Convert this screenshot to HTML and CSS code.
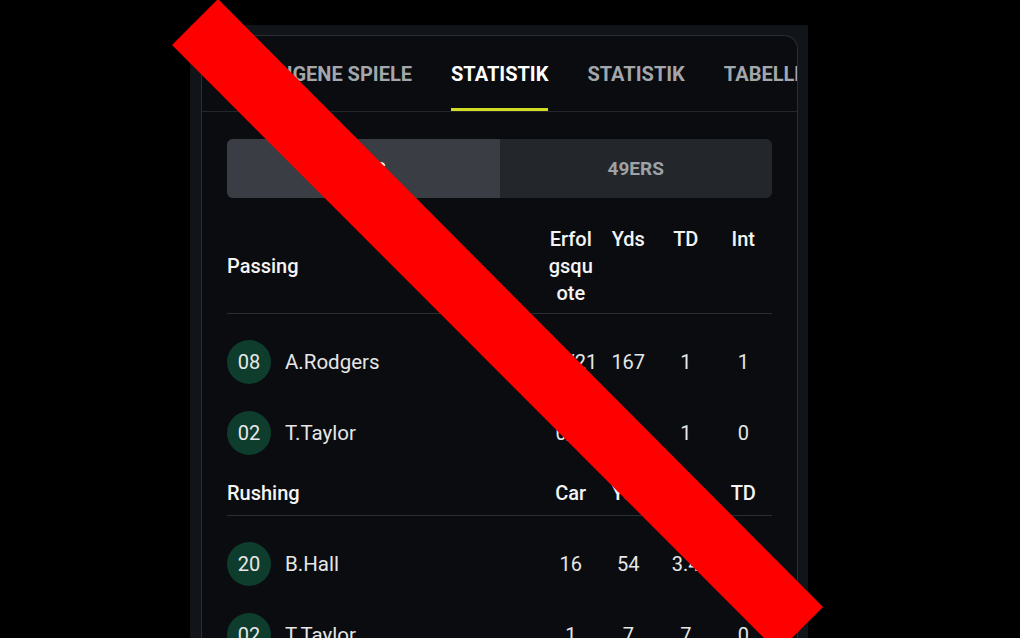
FILE: index.html
```html
<!DOCTYPE html>
<html lang="de">
<head>
<meta charset="utf-8">
<title>Statistik</title>
<link rel="stylesheet" href="styles.css">
</head>
<body>
<div class="stage">
  <div class="panel">
    <div class="card">
      <nav class="tabs">
        <div class="tab tab-first"><span>VERGANGENE SPIELE</span></div>
        <div class="tab tab-active"><span>STATISTIK</span></div>
        <div class="tab"><span>STATISTIK</span></div>
        <div class="tab"><span>TABELLE</span></div>
      </nav>
      <div class="content">
        <div class="segmented">
          <div class="seg seg-active">JETS</div>
          <div class="seg">49ERS</div>
        </div>

        <div class="section">
          <div class="row head head-tall">
            <div class="cat">Passing</div>
            <div class="col">Erfol<wbr>gsqu<wbr>ote</div>
            <div class="col">Yds</div>
            <div class="col">TD</div>
            <div class="col">Int</div>
          </div>
          <div class="body">
            <div class="row player">
              <div class="who"><span class="badge">08</span><span class="name">A.Rodgers</span></div>
              <div class="col">14/21</div>
              <div class="col">167</div>
              <div class="col">1</div>
              <div class="col">1</div>
            </div>
            <div class="row player">
              <div class="who"><span class="badge">02</span><span class="name">T.Taylor</span></div>
              <div class="col">0/0</div>
              <div class="col">0</div>
              <div class="col">1</div>
              <div class="col">0</div>
            </div>
          </div>
        </div>

        <div class="section">
          <div class="row head head-short">
            <div class="cat">Rushing</div>
            <div class="col">Car</div>
            <div class="col">Yds</div>
            <div class="col">Ø</div>
            <div class="col">TD</div>
          </div>
          <div class="body">
            <div class="row player">
              <div class="who"><span class="badge">20</span><span class="name">B.Hall</span></div>
              <div class="col">16</div>
              <div class="col">54</div>
              <div class="col">3.4</div>
              <div class="col">0</div>
            </div>
            <div class="row player">
              <div class="who"><span class="badge">02</span><span class="name">T.Taylor</span></div>
              <div class="col">1</div>
              <div class="col">7</div>
              <div class="col">7</div>
              <div class="col">0</div>
            </div>
          </div>
        </div>
      </div>
    </div>
  </div>
</div>
<svg class="strike" width="1020" height="638" viewBox="0 0 1020 638" aria-hidden="true">
  <polygon points="172,45 218,-1 823,607 778,652" fill="#ff0000"/>
</svg>
</body>
</html>
```

FILE: styles.css
```css
html, body {
  margin: 0;
  padding: 0;
  width: 1020px;
  height: 638px;
  overflow: hidden;
  background: #000;
  font-family: Roboto, "Liberation Sans", sans-serif;
  color: #ececec;
}

.stage {
  display: flex;
  height: 638px;
  padding-left: 190px;
  padding-top: 25px;
  box-sizing: border-box;
}

.panel {
  width: 618px;
  background: #111418;
  padding: 10px 10px 0 11px;
  box-sizing: border-box;
  display: flex;
}

.card {
  flex: 1;
  background: #0a0c0f;
  border: 1px solid #2a2e33;
  border-bottom: none;
  border-radius: 14px 14px 0 0;
  overflow: hidden;
}

.tabs {
  display: flex;
  gap: 39px;
  height: 75px;
  border-bottom: 1px solid #23262a;
  overflow: hidden;
}

.tab {
  position: relative;
  flex-shrink: 0;
  display: flex;
  align-items: center;
  font-weight: 700;
  font-size: 20px;
  color: #a3a6aa;
  white-space: nowrap;
}

.tab-first {
  width: 210px;
  justify-content: flex-end;
}

.tab-active {
  color: #ffffff;
}

.tab-active::after {
  content: "";
  position: absolute;
  left: 0;
  right: 0;
  bottom: 0;
  height: 3px;
  background: #d2dc22;
}

.content {
  padding: 0 25px;
}

.segmented {
  margin-top: 27px;
  height: 59px;
  display: flex;
  border-radius: 6px;
  overflow: hidden;
  background: #23272c;
}

.seg {
  flex: 1;
  display: flex;
  align-items: center;
  justify-content: center;
  font-weight: 700;
  font-size: 19px;
  color: #9ea2a6;
}

.seg-active {
  background: #3a3e44;
  color: #ffffff;
}

.section {
  display: flex;
  flex-direction: column;
}

.row {
  display: grid;
  grid-template-columns: 1fr repeat(4, 57.5px);
  align-items: center;
}

.head {
  border-bottom: 1px solid #2a2d31;
  font-weight: 500;
  font-size: 20px;
  line-height: 27px;
  color: #f4f4f4;
}

.head-tall {
  margin-top: 17px;
  padding: 11px 0 6px;
}

.head-tall .col {
  align-self: start;
}

.head-short {
  padding: 12px 0 8px;
}

.col {
  text-align: center;
}

.body {
  padding-top: 12px;
}

.player {
  height: 71px;
  font-size: 20px;
  color: #e6e6e6;
}

.name {
  font-size: 20.5px;
}

.who {
  display: flex;
  align-items: center;
  gap: 14px;
}

.badge {
  width: 44px;
  height: 44px;
  border-radius: 50%;
  background: #0e3c2d;
  display: flex;
  align-items: center;
  justify-content: center;
  font-size: 20px;
  color: #e8e8e8;
}

.strike {
  position: absolute;
  left: 0;
  top: 0;
}
```
